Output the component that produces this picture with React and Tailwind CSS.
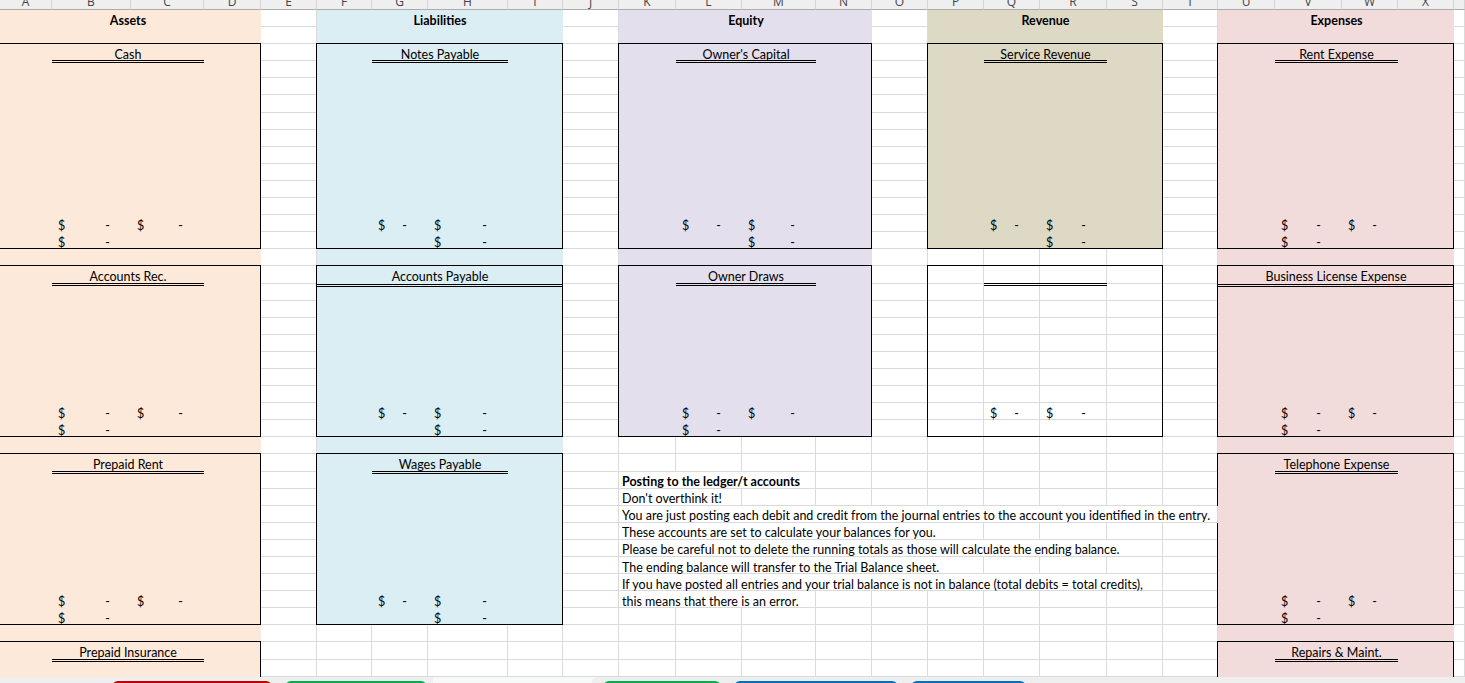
const COLS =
  "grid-cols-[52px_79px_73px_57px_56px_55px_56px_80px_55px_56px_57px_66px_74px_56px_56px_56px_56px_67px_56px_55px_57px_67px_56px_56px_1fr]";
const LETTERS = "ABCDEFGHIJKLMNOPQRSTUVWX ".split("");

/* Section fills (hide the gridlines under them) */
const fills = [
  "col-start-1 col-span-4 row-start-1 row-span-39 bg-[#fde9d9]",
  "col-start-6 col-span-4 row-start-1 row-span-36 bg-[#daeef3]",
  "col-start-11 col-span-4 row-start-1 row-span-25 bg-[#e4dfec]",
  "col-start-16 col-span-4 row-start-1 row-span-14 bg-[#ddd9c4]",
  "col-start-21 col-span-4 row-start-1 row-span-39 bg-[#f2dcdb]",
];

const headings = [
  { cls: "col-start-2 col-span-2", text: "Assets" },
  { cls: "col-start-7 col-span-2", text: "Liabilities" },
  { cls: "col-start-12 col-span-2", text: "Equity" },
  { cls: "col-start-17 col-span-2", text: "Revenue" },
  { cls: "col-start-22 col-span-2", text: "Expenses" },
];

/* T-account boxes */
const boxes = [
  "col-start-1 col-span-4 row-start-3 row-span-12 border-y border-r -mt-px",
  "col-start-1 col-span-4 row-start-16 row-span-10 border-y border-r -mt-px",
  "col-start-1 col-span-4 row-start-27 row-span-10 border-y border-r -mt-px",
  "col-start-1 col-span-4 row-start-38 row-span-2 border-t border-r -mt-px",
  "col-start-6 col-span-4 row-start-3 row-span-12 border -mt-px -ml-px",
  "col-start-6 col-span-4 row-start-16 row-span-10 border -mt-px -ml-px",
  "col-start-6 col-span-4 row-start-27 row-span-10 border -mt-px -ml-px",
  "col-start-11 col-span-4 row-start-3 row-span-12 border -mt-px -ml-px",
  "col-start-11 col-span-4 row-start-16 row-span-10 border -mt-px -ml-px",
  "col-start-16 col-span-4 row-start-3 row-span-12 border -mt-px -ml-px",
  "col-start-16 col-span-4 row-start-16 row-span-10 border -mt-px -ml-px",
  "col-start-21 col-span-4 row-start-3 row-span-12 border -mt-px -ml-px",
  "col-start-21 col-span-4 row-start-16 row-span-10 border -mt-px -ml-px",
  "col-start-21 col-span-4 row-start-27 row-span-10 border -mt-px -ml-px",
  "col-start-21 col-span-4 row-start-38 row-span-2 border-t border-x -mt-px -ml-px",
];

const titles = [
  { cls: "col-start-2 col-span-2 row-start-3 -mb-[2px]", text: "Cash" },
  { cls: "col-start-2 col-span-2 row-start-16 -mb-[2px]", text: "Accounts Rec." },
  { cls: "col-start-2 col-span-2 row-start-27 -mb-[2px]", text: "Prepaid Rent" },
  { cls: "col-start-2 col-span-2 row-start-38 -mb-[2px]", text: "Prepaid Insurance" },
  { cls: "col-start-7 col-span-2 row-start-3 -mb-[2px]", text: "Notes Payable" },
  { cls: "col-start-6 col-span-4 row-start-16 -mb-[3px]", text: "Accounts Payable" },
  { cls: "col-start-7 col-span-2 row-start-27 -mb-[2px]", text: "Wages Payable" },
  { cls: "col-start-12 col-span-2 row-start-3 -mb-[2px]", text: "Owner's Capital" },
  { cls: "col-start-12 col-span-2 row-start-16 -mb-[2px]", text: "Owner Draws" },
  { cls: "col-start-17 col-span-2 row-start-3 -mb-[2px]", text: "Service Revenue" },
  { cls: "col-start-17 col-span-2 row-start-16 -mb-[2px]", text: "" },
  { cls: "col-start-22 col-span-2 row-start-3 -mb-[2px]", text: "Rent Expense" },
  { cls: "col-start-21 col-span-4 row-start-16 -mb-[3px]", text: "Business License Expense" },
  { cls: "col-start-22 col-span-2 row-start-27 -mb-[2px]", text: "Telephone Expense" },
  { cls: "col-start-22 col-span-2 row-start-38 -mb-[2px]", text: "Repairs & Maint." },
];

/* Running totals: "$ -" cells */
const amounts = [
  "row-start-13 col-start-2", "row-start-13 col-start-3", "row-start-14 col-start-2",
  "row-start-24 col-start-2", "row-start-24 col-start-3", "row-start-25 col-start-2",
  "row-start-35 col-start-2", "row-start-35 col-start-3", "row-start-36 col-start-2",
  "row-start-13 col-start-7", "row-start-13 col-start-8", "row-start-14 col-start-8",
  "row-start-24 col-start-7", "row-start-24 col-start-8", "row-start-25 col-start-8",
  "row-start-35 col-start-7", "row-start-35 col-start-8", "row-start-36 col-start-8",
  "row-start-13 col-start-12", "row-start-13 col-start-13", "row-start-14 col-start-13",
  "row-start-24 col-start-12", "row-start-24 col-start-13", "row-start-25 col-start-12",
  "row-start-13 col-start-17", "row-start-13 col-start-18", "row-start-14 col-start-18",
  "row-start-24 col-start-17", "row-start-24 col-start-18",
  "row-start-13 col-start-22", "row-start-13 col-start-23", "row-start-14 col-start-22",
  "row-start-24 col-start-22", "row-start-24 col-start-23", "row-start-25 col-start-22",
  "row-start-35 col-start-22", "row-start-35 col-start-23", "row-start-36 col-start-22",
];

const notes = [
  { cls: "row-start-28 col-start-11 col-span-3 font-bold", text: "Posting to the ledger/t accounts" },
  { cls: "row-start-29 col-start-11 col-span-2", text: "Don't overthink it!" },
  { cls: "row-start-30 col-start-11 col-span-10", text: "You are just posting each debit and credit from the journal entries to the account you identified in the entry." },
  { cls: "row-start-31 col-start-11 col-span-6", text: "These accounts are set to calculate your balances for you." },
  { cls: "row-start-32 col-start-11 col-span-9", text: "Please be careful not to delete the running totals as those will calculate the ending balance." },
  { cls: "row-start-33 col-start-11 col-span-6", text: "The ending balance will transfer to the Trial Balance sheet." },
  { cls: "row-start-34 col-start-11 col-span-9", text: "If you have posted all entries and your trial balance is not in balance (total debits = total credits)," },
  { cls: "row-start-35 col-start-11 col-span-3", text: "this means that there is an error." },
];

export default function App() {
  return (
    <div className="h-[683px] w-[1465px] overflow-hidden bg-white flex flex-col text-black text-[12.5px] [font-family:Lato,sans-serif]">
      {/* Column letters */}
      <div className={`grid ${COLS} h-[10px] shrink-0`}>
        {LETTERS.map((l, i) => (
          <div
            key={i}
            className="overflow-hidden bg-[#efefef] border-r border-b border-r-[#d5d5d5] border-b-[#ababab] text-center text-[12px] leading-[12px] text-[#444] [font-family:'Open_Sans',sans-serif]"
          >
            <div className="-mt-[4px]">{l}</div>
          </div>
        ))}
      </div>

      {/* Sheet */}
      <div className={`grid ${COLS} grid-rows-[repeat(39,17.1px)] shrink-0`}>
        {/* Gridlines */}
        <div className={`col-start-1 col-span-25 row-start-1 row-span-39 grid ${COLS} grid-rows-[repeat(39,17.1px)]`}>
          {Array.from({ length: 39 * 25 }).map((_, i) => (
            <div key={i} className="border-r border-b border-[#dadada]" />
          ))}
        </div>

        {fills.map((c) => (
          <div key={c} className={c} />
        ))}

        {headings.map((h) => (
          <div key={h.text} className={`${h.cls} row-start-1 pt-[1.5px] text-center font-bold leading-[17px]`}>
            {h.text}
          </div>
        ))}

        {boxes.map((c) => (
          <div key={c} className={`${c} border-black`} />
        ))}

        {titles.map((t) => (
          <div
            key={t.cls}
            className={`${t.cls} pt-[1.5px] border-b-[3px] border-double border-black text-center leading-[17px] whitespace-nowrap`}
          >
            {t.text}
          </div>
        ))}

        {amounts.map((c) => (
          <div key={c} className={`${c} flex justify-between pt-[1.5px] pl-[6px] pr-[21px] leading-[17px]`}>
            <span>$</span>
            <span>-</span>
          </div>
        ))}

        {notes.map((n) => (
          <div
            key={n.cls}
            className={`${n.cls} bg-white border-r border-b border-[#dadada] pt-[1.5px] pl-[3px] whitespace-nowrap leading-[17px]`}
          >
            {n.text}
          </div>
        ))}
      </div>

      {/* Sheet tabs strip */}
      <div className="flex flex-1 bg-[#f6f9f7]">
        <div className="flex w-[433px] bg-[#efefef]">
          <div className="ml-[112px] mt-[4px] h-[6px] w-[160px] rounded-t-[6px] bg-[#c00000]" />
          <div className="ml-[13px] mt-[4px] h-[6px] w-[142px] rounded-t-[6px] bg-[#00b050]" />
        </div>
        <div className="w-[159px]" />
        <div className="flex flex-1 rounded-tl-[6px] bg-[#efefef]">
          <div className="ml-[11px] mt-[4px] h-[6px] w-[118px] rounded-t-[6px] bg-[#00b050]" />
          <div className="ml-[13px] mt-[4px] h-[6px] w-[164px] rounded-t-[6px] bg-[#0070c0]" />
          <div className="ml-[13px] mt-[4px] h-[6px] w-[115px] rounded-t-[6px] bg-[#0070c0]" />
        </div>
      </div>
    </div>
  );
}
